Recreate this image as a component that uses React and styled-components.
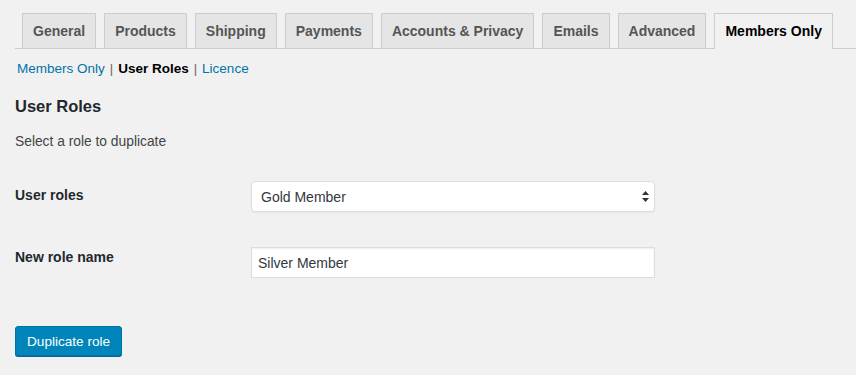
import React from "react";
import styled, { createGlobalStyle } from "styled-components";

const Global = createGlobalStyle`
  html, body { margin: 0; padding: 0; background: #f1f1f1; }
  body { font-family: "Liberation Sans", Arial, sans-serif; color: #444; }
`;

const Page = styled.div`
  width: 856px;
  height: 375px;
  overflow: hidden;
  padding-left: 15px;
  box-sizing: border-box;
  background: #f1f1f1;
`;

const TabBar = styled.nav`
  display: flex;
  gap: 8px;
  padding: 13px 0 0 7px;
  border-bottom: 1px solid #ccc;
  height: 35px;
  box-sizing: content-box;
`;

const Tab = styled.a`
  display: block;
  box-sizing: border-box;
  height: ${p => (p.$active ? "36px" : "35px")};
  padding: 5px 10px;
  border: 1px solid #ccc;
  border-bottom: none;
  background: ${p => (p.$active ? "#f1f1f1" : "#e5e5e5")};
  color: ${p => (p.$active ? "#000" : "#555")};
  font-size: 14px;
  font-weight: 700;
  line-height: 24px;
  white-space: nowrap;
  margin-bottom: ${p => (p.$active ? "-1px" : "0")};
`;

const SubNav = styled.div`
  display: flex;
  align-items: center;
  margin-top: 9px;
  padding-left: 2px;
  height: 20px;
  font-size: 13.5px;
  color: #555;
`;

const SubLink = styled.a`
  color: ${p => (p.$current ? "#000" : "#0073aa")};
  font-weight: ${p => (p.$current ? 700 : 400)};
`;

const Sep = styled.span`
  color: #666;
  margin: 0 5px;
  font-size: 13px;
`;

const Heading = styled.h2`
  margin: 18px 0 0;
  font-size: 16.5px;
  line-height: 20px;
  font-weight: 700;
  color: #23282d;
`;

const Desc = styled.p`
  margin: 17px 0 0;
  font-size: 13.8px;
  line-height: 18px;
  color: #444;
`;

const Form = styled.div`
  display: grid;
  grid-template-columns: 236px 404px;
  row-gap: 35px;
  margin-top: 30px;
  align-items: center;
`;

const Label = styled.label`
  font-size: 14px;
  font-weight: 700;
  color: #23282d;
  align-self: start;
  padding-top: ${p => p.$top || 6}px;
`;

const SelectWrap = styled.div`
  position: relative;
  height: 31px;
`;

const Select = styled.select`
  appearance: none;
  -webkit-appearance: none;
  width: 100%;
  height: 31px;
  box-sizing: border-box;
  border: 1px solid #ddd;
  border-radius: 4px;
  background: #fff;
  padding: 0 9px;
  font-family: "Liberation Sans", Arial, sans-serif;
  font-size: 14px;
  color: #32373c;
  box-shadow: 0 1px 2px rgba(0,0,0,0.05);
  outline: none;
`;

const Arrows = styled.svg`
  position: absolute;
  right: 6px;
  top: 10px;
  pointer-events: none;
`;

const Input = styled.input`
  width: 100%;
  height: 31px;
  box-sizing: border-box;
  border: 1px solid #ddd;
  background: #fff;
  padding: 0 6px;
  font-family: "Liberation Sans", Arial, sans-serif;
  font-size: 14px;
  color: #32373c;
  box-shadow: inset 0 1px 2px rgba(0,0,0,0.07);
  outline: none;
`;

const Button = styled.button`
  margin-top: 48px;
  height: 30px;
  padding: 0 11px;
  background: #0085ba;
  border: 1px solid #0073aa;
  border-radius: 3px;
  color: #fff;
  font-family: "Liberation Sans", Arial, sans-serif;
  font-size: 13.6px;
  box-shadow: 0 1px 0 #006799;
  cursor: pointer;
`;

const tabs = ["General", "Products", "Shipping", "Payments", "Accounts & Privacy", "Emails", "Advanced", "Members Only"];

export default function App() {
  return (
    <Page>
      <Global />
      <TabBar>
        {tabs.map(t => (
          <Tab key={t} $active={t === "Members Only"}>{t}</Tab>
        ))}
      </TabBar>
      <SubNav>
        <SubLink>Members Only</SubLink>
        <Sep>|</Sep>
        <SubLink $current>User Roles</SubLink>
        <Sep>|</Sep>
        <SubLink>Licence</SubLink>
      </SubNav>
      <Heading>User Roles</Heading>
      <Desc>Select a role to duplicate</Desc>
      <Form>
        <Label $top={6}>User roles</Label>
        <SelectWrap>
          <Select defaultValue="gold">
            <option value="gold">Gold Member</option>
            <option value="silver">Silver Member</option>
          </Select>
          <Arrows width="7" height="11" viewBox="0 0 7 11">
            <path d="M3.5 0 L7 4 L0 4 Z" fill="#333" />
            <path d="M3.5 11 L7 7 L0 7 Z" fill="#333" />
          </Arrows>
        </SelectWrap>
        <Label $top={2}>New role name</Label>
        <Input defaultValue="Silver Member" />
      </Form>
      <Button>Duplicate role</Button>
    </Page>
  );
}
